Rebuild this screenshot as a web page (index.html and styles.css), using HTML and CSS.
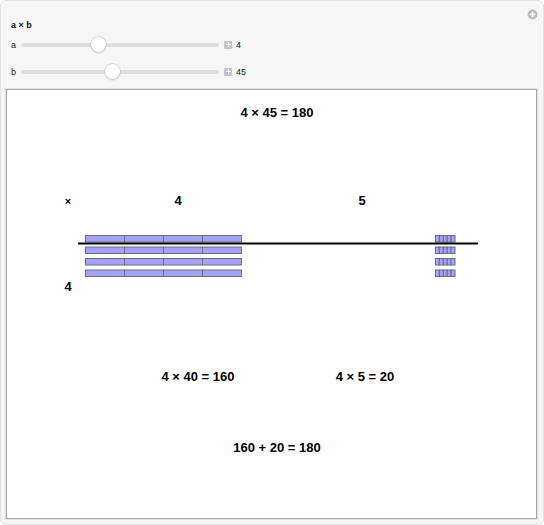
FILE: index.html
```html
<!DOCTYPE html>
<html>
<head>
<meta charset="utf-8">
<link rel="stylesheet" href="styles.css">
</head>
<body>
<div class="frame">
  <span class="corner-btn"><svg width="11" height="11" viewBox="0 0 11 11"><circle cx="5.5" cy="5.5" r="5" fill="#bdbdbd"/><path d="M5.5 2.8v5.4M2.8 5.5h5.4" stroke="#fff" stroke-width="1.6"/></svg></span>
  <div class="controls">
    <div class="title">a × b</div>
    <div class="row">
      <span class="lbl">a</span>
      <div class="track"><span class="thumb" style="left:71px"></span></div>
      <span class="plus"></span>
      <span class="val">4</span>
    </div>
    <div class="row">
      <span class="lbl">b</span>
      <div class="track"><span class="thumb" style="left:85px"></span></div>
      <span class="plus"></span>
      <span class="val">45</span>
    </div>
  </div>
  <div class="panel">
    <svg class="plot" width="529" height="428" viewBox="7 90 529 428">
      <g class="txt">
        <text x="277" y="117" text-anchor="middle">4 × 45 = 180</text>
        <text x="68" y="205" text-anchor="middle" class="small">×</text>
        <text x="178" y="205" text-anchor="middle">4</text>
        <text x="362" y="205" text-anchor="middle">5</text>
        <text x="68" y="291" text-anchor="middle">4</text>
        <text x="198" y="381" text-anchor="middle">4 × 40 = 160</text>
        <text x="365" y="381" text-anchor="middle">4 × 5 = 20</text>
        <text x="277" y="452" text-anchor="middle">160 + 20 = 180</text>
      </g>
      <g class="bars">
        <rect x="85.5" y="235.5" width="39" height="6.5"/><rect x="124.5" y="235.5" width="39" height="6.5"/><rect x="163.5" y="235.5" width="39" height="6.5"/><rect x="202.5" y="235.5" width="39" height="6.5"/>
        <rect x="85.5" y="247" width="39" height="6.5"/><rect x="124.5" y="247" width="39" height="6.5"/><rect x="163.5" y="247" width="39" height="6.5"/><rect x="202.5" y="247" width="39" height="6.5"/>
        <rect x="85.5" y="258.5" width="39" height="6.5"/><rect x="124.5" y="258.5" width="39" height="6.5"/><rect x="163.5" y="258.5" width="39" height="6.5"/><rect x="202.5" y="258.5" width="39" height="6.5"/>
        <rect x="85.5" y="270" width="39" height="6.5"/><rect x="124.5" y="270" width="39" height="6.5"/><rect x="163.5" y="270" width="39" height="6.5"/><rect x="202.5" y="270" width="39" height="6.5"/>

        <rect x="435.5" y="235.5" width="3.9" height="6.5"/><rect x="439.4" y="235.5" width="3.9" height="6.5"/><rect x="443.3" y="235.5" width="3.9" height="6.5"/><rect x="447.2" y="235.5" width="3.9" height="6.5"/><rect x="451.1" y="235.5" width="3.9" height="6.5"/>
        <rect x="435.5" y="247" width="3.9" height="6.5"/><rect x="439.4" y="247" width="3.9" height="6.5"/><rect x="443.3" y="247" width="3.9" height="6.5"/><rect x="447.2" y="247" width="3.9" height="6.5"/><rect x="451.1" y="247" width="3.9" height="6.5"/>
        <rect x="435.5" y="258.5" width="3.9" height="6.5"/><rect x="439.4" y="258.5" width="3.9" height="6.5"/><rect x="443.3" y="258.5" width="3.9" height="6.5"/><rect x="447.2" y="258.5" width="3.9" height="6.5"/><rect x="451.1" y="258.5" width="3.9" height="6.5"/>
        <rect x="435.5" y="270" width="3.9" height="6.5"/><rect x="439.4" y="270" width="3.9" height="6.5"/><rect x="443.3" y="270" width="3.9" height="6.5"/><rect x="447.2" y="270" width="3.9" height="6.5"/><rect x="451.1" y="270" width="3.9" height="6.5"/>
      </g>
      <line x1="78" y1="243.5" x2="478" y2="243.5" class="axis"/>
    </svg>
  </div>
</div>
</body>
</html>
```

FILE: styles.css
```css
html, body {
  margin: 0;
  padding: 0;
  background: #ffffff;
}
.frame {
  position: relative;
  width: 544px;
  height: 525px;
  box-sizing: border-box;
  border: 1px solid #e2e2e2;
  border-radius: 6px;
  background: #f6f6f6;
  font-family: "Liberation Sans", Arial, sans-serif;
  padding-top: 18px;
}
.corner-btn {
  position: absolute;
  top: 8px;
  right: 5px;
  width: 11px;
  height: 11px;
  line-height: 0;
}
.controls {
  padding-left: 10px;
  height: 70px;
}
.title {
  font-size: 9px;
  font-weight: bold;
  color: #111;
  height: 12px;
  line-height: 12px;
  margin-bottom: 6px;
}
.row {
  display: flex;
  align-items: center;
  height: 15px;
  margin-bottom: 12px;
  font-size: 9px;
  color: #222;
}
.lbl {
  width: 10px;
}
.track {
  position: relative;
  width: 198px;
  height: 4px;
  border-radius: 2px;
  background: #dedede;
}
.thumb {
  position: absolute;
  top: -6px;
  width: 15px;
  height: 15px;
  margin-left: -1px;
  border-radius: 50%;
  background: #ffffff;
  box-shadow: 0 0 1px 0.5px #bdbdbd, 0 1px 2px rgba(0,0,0,0.15);
}
.plus {
  position: relative;
  width: 8px;
  height: 8px;
  margin-left: 5px;
  background: #c4c4c4;
  border-radius: 1px;
}
.plus::before, .plus::after {
  content: "";
  position: absolute;
  background: #fff;
}
.plus::before { left: 1.5px; top: 3.5px; width: 5px; height: 1px; }
.plus::after { left: 3.5px; top: 1.5px; width: 1px; height: 5px; }
.val {
  margin-left: 4px;
}
.panel {
  margin-left: 5px;
  width: 531px;
  height: 430px;
  box-sizing: border-box;
  border: 1px solid #a9a9a9;
  background: #ffffff;
  box-shadow: 0 0 0 1px #e0e0e0;
}
.plot {
  display: block;
}
.txt text {
  font-family: "Liberation Sans", Arial, sans-serif;
  font-size: 13px;
  font-weight: bold;
  fill: #000;
}
.txt text.small {
  font-size: 11px;
}
.bars rect {
  fill: #a3a3f7;
  stroke: #6d6d80;
  stroke-width: 1;
}
.axis {
  stroke: #000;
  stroke-width: 2;
}
```
